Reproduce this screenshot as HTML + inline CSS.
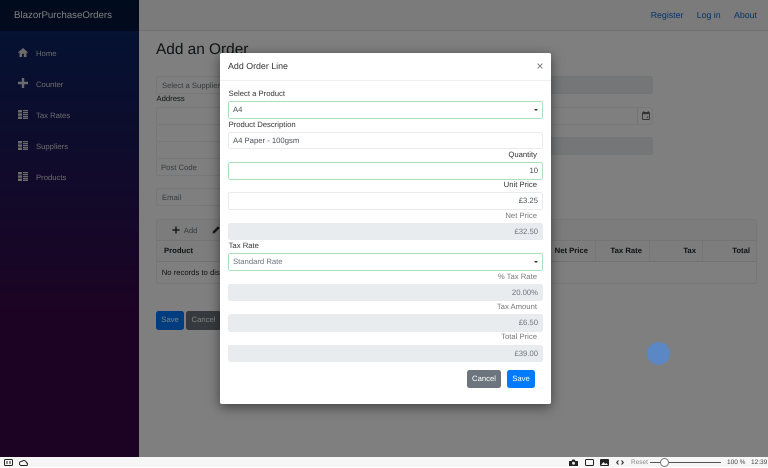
<!DOCTYPE html>
<html lang="en">
<head>
<meta charset="utf-8">
<title>BlazorPurchaseOrders</title>
<style>
*{box-sizing:border-box}
html,body{margin:0;padding:0;width:768px;height:467px;overflow:hidden;background:#fff;font-family:"Liberation Sans",sans-serif;color:#212529;text-rendering:geometricPrecision}
#wrap{position:absolute;left:0;top:0;width:768px;height:467px;filter:blur(.3px)}
.a{position:absolute}
.t{position:absolute;white-space:nowrap;line-height:12px;font-size:7.7px}
.r{text-align:right}
#side{left:0;top:0;width:139px;height:457px;background:linear-gradient(180deg,#052767 0%,#3a0647 70%)}
#top{left:0;top:0;width:139px;height:31px;background:rgba(0,0,0,.4)}
#main{left:139px;top:0;width:629px;height:457px;background:#fff}
#bar{left:0;top:0;width:629px;height:31px;background:#f7f7f7;border-bottom:1px solid #e2e2e2}
.n{color:#d7d7d7;font-size:7.7px}
.in{position:absolute;border:1px solid #eceef0;border-radius:2.5px;background:#fff}
.dis{background:#e9ecef;border-color:#e6e8eb}
.ph{color:#6c757d}
#ov{left:0;top:0;width:768px;height:457px;background:rgba(0,0,0,.5)}
#modal{left:220px;top:53px;width:331px;height:351px;background:#fff;border-radius:2px;box-shadow:0 3px 12px rgba(0,0,0,.5)}
.f{position:absolute;left:8px;width:315px;border:1px solid #e8eaed;border-radius:2.5px;background:#fff;font-size:7.7px;line-height:15.5px;padding:0 4px;color:#495057;white-space:nowrap}
.g{border:1px solid #a9e0b8}
.d{background:#e9ecef;border-color:#e8eaed;color:#6c757d;text-align:right}
.v{text-align:right}
.l{position:absolute;font-size:7.7px;line-height:11px;white-space:nowrap;color:#333}
.rl{right:14px;text-align:right}
.m{color:#777}
.arr{position:absolute;right:4px;top:7px;width:0;height:0;border-left:2.3px solid transparent;border-right:2.3px solid transparent;border-top:2.3px solid #333}
.btn{position:absolute;top:317px;height:18px;border-radius:2.5px;color:#fff;font-size:7.7px;line-height:17.5px;text-align:center}
#foot{left:0;top:457px;width:768px;height:10px;background:#f6f6f6}
svg{position:absolute;display:block}
</style>
</head>
<body>
<div id="wrap">
<div class="a" id="main">
  <div class="a" id="bar"></div>
  <div class="t" style="left:511.7px;top:9px;color:#0366d6;font-size:8.8px">Register</div>
  <div class="t" style="left:557.7px;top:9px;color:#0366d6;font-size:8.8px">Log in</div>
  <div class="t" style="left:595px;top:9px;color:#0366d6;font-size:8.8px">About</div>
  <div class="t" style="left:17px;top:40px;font-size:15.4px;line-height:20px;color:#212529">Add an Order</div>

  <div class="in" style="left:17px;top:76px;width:200px;height:18px"></div>
  <div class="t ph" style="left:23px;top:79.5px">Select a Supplier</div>
  <div class="t" style="left:17.5px;top:93px">Address</div>
  <div class="in" style="left:17px;top:107px;width:200px;height:17.5px"></div>
  <div class="in" style="left:17px;top:124px;width:200px;height:17.5px"></div>
  <div class="in" style="left:17px;top:141px;width:200px;height:17.5px"></div>
  <div class="in" style="left:17px;top:158px;width:200px;height:18px"></div>
  <div class="t ph" style="left:22px;top:161.5px">Post Code</div>
  <div class="in" style="left:17px;top:188px;width:200px;height:18px"></div>
  <div class="t ph" style="left:23px;top:191.5px">Email</div>

  <div class="in dis" style="left:400px;top:76px;width:114px;height:18px"></div>
  <div class="in" style="left:400px;top:107px;width:114px;height:17.5px"></div>
  <div class="a" style="left:498px;top:107px;width:1px;height:17px;background:#e6e8ea"></div>
  <svg style="left:503px;top:110.5px" width="8" height="9" viewBox="0 0 9 10"><rect x=".5" y="1.5" width="8" height="8" rx="1" fill="none" stroke="#666" stroke-width="1"/><rect x=".5" y="1.5" width="8" height="2" fill="#666"/><path d="M2 0v2M7 0v2" stroke="#666"/><rect x="5.5" y="6" width="1.5" height="1.5" fill="#666"/></svg>
  <div class="in dis" style="left:400px;top:137px;width:114px;height:18px"></div>

  <div class="in" style="left:17px;top:219px;width:601px;height:65px;background:#fff"></div>
  <div class="a" style="left:18px;top:220px;width:599px;height:21px;background:#f7f8f7;border-bottom:1px solid #e8e8e8"></div>
  <div class="a" style="left:18px;top:241px;width:599px;height:21px;background:#fafafa;border-bottom:1px solid #e4e4e4"></div>
  <svg style="left:32.5px;top:226px" width="8" height="8" viewBox="0 0 9 9"><path d="M3.7 .5h1.6v3.2h3.2v1.6H5.3v3.2H3.7V5.3H.5V3.7h3.2z" fill="#333"/></svg>
  <div class="t" style="left:44.7px;top:225px;color:#6c757d">Add</div>
  <svg style="left:72.5px;top:225px" width="9" height="9" viewBox="0 0 9 9"><path d="M.5 8.5l.5-2.3L6 1.2l1.8 1.8-5 5z" fill="#333"/></svg>
  <div class="t" style="left:25px;top:245px;font-weight:700">Product</div>
  <div class="t" style="left:22.7px;top:267px;">No records to display</div>
  <div class="t r" style="right:180px;top:245px;font-weight:700">Net Price</div>
  <div class="t r" style="right:126px;top:245px;font-weight:700">Tax Rate</div>
  <div class="t r" style="right:72px;top:245px;font-weight:700">Tax</div>
  <div class="t r" style="right:18px;top:245px;font-weight:700">Total</div>
  <div class="a" style="left:456px;top:241px;width:1px;height:20px;background:#ececec"></div>
  <div class="a" style="left:510px;top:241px;width:1px;height:20px;background:#ececec"></div>
  <div class="a" style="left:563px;top:241px;width:1px;height:20px;background:#ececec"></div>

  <div class="a" style="left:17px;top:311px;width:28px;height:19px;background:#007bff;border-radius:2.5px;color:#fff;font-size:7.7px;line-height:18px;text-align:center">Save</div>
  <div class="a" style="left:47px;top:311px;width:35px;height:19px;background:#6c757d;border-radius:2.5px;color:#fff;font-size:7.7px;line-height:18px;text-align:center">Cancel</div>
</div>

<div class="a" id="side"></div>
<div class="a" id="top"></div>
<div class="t" style="left:14px;top:9.5px;color:#fff;font-size:9.7px">BlazorPurchaseOrders</div>
<svg style="left:18px;top:48px" width="10" height="9" viewBox="0 0 10 9"><path d="M5 0L0 4.4l.6.7L1.5 4.4V9h2.6V5.8h1.8V9h2.6V4.4l.9.7.6-.7z" fill="#d7d7d7"/></svg>
<div class="t n" style="left:36px;top:47.5px">Home</div>
<svg style="left:18px;top:78px" width="10" height="10" viewBox="0 0 10 10"><path d="M3.8 0h2.4v3.8H10v2.4H6.2V10H3.8V6.2H0V3.8h3.8z" fill="#d7d7d7"/></svg>
<div class="t n" style="left:36px;top:78.5px">Counter</div>
<svg style="left:18px;top:110px" width="10" height="9" viewBox="0 0 10 9"><path d="M0 0h4v2.5H0zM5 0h5v1.2H5zM5 2h5v1.2H5zM0 3.4h4v2.3H0zM0 6.5h4V9H0zM5 4h5v1.2H5zM5 6h5v1.2H5zM5 7.8h5V9H5z" fill="#d7d7d7"/></svg>
<div class="t n" style="left:36px;top:109.5px">Tax Rates</div>
<svg style="left:18px;top:141px" width="10" height="9" viewBox="0 0 10 9"><path d="M0 0h4v2.5H0zM5 0h5v1.2H5zM5 2h5v1.2H5zM0 3.4h4v2.3H0zM0 6.5h4V9H0zM5 4h5v1.2H5zM5 6h5v1.2H5zM5 7.8h5V9H5z" fill="#d7d7d7"/></svg>
<div class="t n" style="left:36px;top:140.5px">Suppliers</div>
<svg style="left:18px;top:172px" width="10" height="9" viewBox="0 0 10 9"><path d="M0 0h4v2.5H0zM5 0h5v1.2H5zM5 2h5v1.2H5zM0 3.4h4v2.3H0zM0 6.5h4V9H0zM5 4h5v1.2H5zM5 6h5v1.2H5zM5 7.8h5V9H5z" fill="#d7d7d7"/></svg>
<div class="t n" style="left:36px;top:171.5px">Products</div>

<div class="a" id="ov"></div>
<div class="a" style="left:646.5px;top:341.5px;width:23.4px;height:23.4px;border-radius:50%;background:#5b88c4"></div>

<div class="a" id="modal">
  <div class="t" style="left:8px;top:7px;font-size:8.85px;color:#333">Add Order Line</div>
  <svg style="left:316.5px;top:10px" width="6" height="6" viewBox="0 0 7 7"><path d="M.7.7l5.6 5.6M6.3.7L.7 6.3" stroke="#777" stroke-width="1.1" fill="none"/></svg>
  <div class="a" style="left:0;top:27px;width:331px;height:1px;background:#f0f0f0"></div>

  <div class="l" style="left:8.6px;top:35px">Select a Product</div>
  <div class="f g" style="top:48px;height:17.5px">A4<span class="arr"></span></div>
  <div class="l" style="left:8.6px;top:66px">Product Description</div>
  <div class="f" style="top:78.5px;height:17.5px">A4 Paper - 100gsm</div>
  <div class="l rl" style="top:96px">Quantity</div>
  <div class="f g v" style="top:109px;height:17.5px">10</div>
  <div class="l rl" style="top:126px">Unit Price</div>
  <div class="f v" style="top:139px;height:17.5px">£3.25</div>
  <div class="l rl m" style="top:157px">Net Price</div>
  <div class="f d" style="top:169.5px;height:17.5px">£32.50</div>
  <div class="l" style="left:8.6px;top:187px">Tax Rate</div>
  <div class="f g" style="top:200px;height:17.5px;color:#6c757d">Standard Rate<span class="arr"></span></div>
  <div class="l rl m" style="top:217.5px">% Tax Rate</div>
  <div class="f d" style="top:230.5px;height:17.5px">20.00%</div>
  <div class="l rl m" style="top:248px">Tax Amount</div>
  <div class="f d" style="top:261px;height:17.5px">£6.50</div>
  <div class="l rl m" style="top:278px">Total Price</div>
  <div class="f d" style="top:291.5px;height:17.5px">£39.00</div>
  <div class="btn" style="left:247px;width:34px;background:#6c757d">Cancel</div>
  <div class="btn" style="left:287px;width:28px;background:#007bff">Save</div>
</div>

<div class="a" id="foot"></div>
<svg style="left:4px;top:459px" width="9" height="7" viewBox="0 0 9 7"><rect x=".5" y=".5" width="8" height="6" rx="1" fill="none" stroke="#222"/><path d="M3 2v3M6 2v3" stroke="#222"/></svg>
<svg style="left:19px;top:459px" width="9" height="7" viewBox="0 0 9 7"><path d="M2 6.5h5.2a1.3 1.3 0 0 0 .3-2.6A2.6 2.6 0 0 0 3 2.4 2 2 0 0 0 2 6.5z" fill="none" stroke="#222"/></svg>
<svg style="left:569px;top:459px" width="9" height="7" viewBox="0 0 9 7"><path d="M0 2h2.5l1-1.5h2l1 1.5H9v5H0z" fill="#222"/><circle cx="4.5" cy="4.2" r="1.4" fill="#f4f4f4"/></svg>
<svg style="left:585px;top:459px" width="9" height="7" viewBox="0 0 9 7"><rect x=".5" y=".5" width="8" height="6" rx="1" fill="none" stroke="#222"/></svg>
<svg style="left:600px;top:459px" width="9" height="7" viewBox="0 0 9 7"><rect width="9" height="7" rx="1" fill="#222"/><path d="M1 6l2.5-3 1.7 2 1.2-1L8 6z" fill="#f4f4f4"/></svg>
<svg style="left:616px;top:460px" width="8" height="5" viewBox="0 0 8 5"><path d="M2.5.5L.7 2.5l1.8 2M5.5.5l1.8 2-1.8 2" fill="none" stroke="#222"/></svg>
<div class="t" style="left:631px;top:457px;font-size:6.5px;line-height:11px;color:#888">Reset</div>
<div class="a" style="left:650px;top:461.5px;width:71px;height:1.5px;background:#555"></div>
<div class="a" style="left:660px;top:458px;width:9px;height:9px;border-radius:50%;background:#fff;border:1px solid #777"></div>
<div class="t" style="left:727px;top:457px;font-size:6.5px;line-height:11px;color:#444">100 %</div>
<div class="t" style="left:751px;top:457px;font-size:6.5px;line-height:11px;color:#444">12:39</div>
</div>
</body>
</html>
